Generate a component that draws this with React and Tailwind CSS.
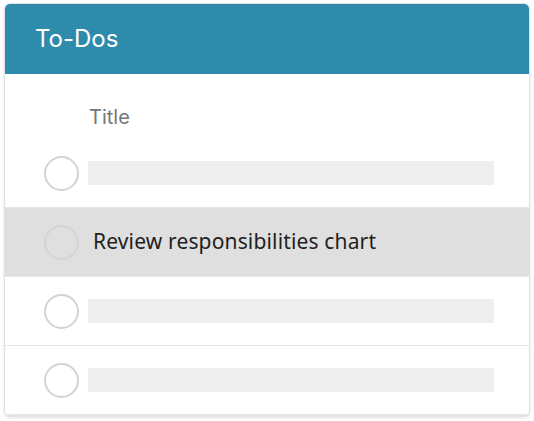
export default function App() {
  const rows = [
    { text: null, active: false },
    { text: "Review responsibilities chart", active: true },
    { text: null, active: false },
    { text: null, active: false },
  ];
  return (
    <div className="w-[534px] h-[421px] bg-white pl-[4px] pt-[3px]">
      <div className="w-[526px] rounded-[6px] border border-[#e2e2e2] shadow-[0_2px_3px_rgba(0,0,0,0.12)] overflow-hidden bg-white">
        <div className="h-[71px] bg-[#2e8bac] flex items-center pl-[31px] -mx-px -mt-px">
          <span className="text-white text-[24px] font-['Inter',sans-serif] font-normal">To-Dos</span>
        </div>
        <div className="h-[65px] flex items-end pb-[7px] pl-[84px]">
          <span className="text-[#777777] text-[20px] font-['Inter',sans-serif]">Title</span>
        </div>
        {rows.map((r, i) => (
          <div
            key={i}
            className={
              "h-[69px] flex items-center border-b border-[#e6e6e6] " +
              (r.active ? "bg-[#dfdfdf]" : "bg-white")
            }
          >
            <div className="ml-[39px] w-[35px] h-[35px] rounded-full border-2 border-[#d3d3d3] shrink-0" />
            {r.text ? (
              <span className="ml-[14px] text-[#1e1e1e] text-[21px] tracking-[0.15px] font-['Noto_Sans',sans-serif]">{r.text}</span>
            ) : (
              <div className="ml-[9px] w-[406px] h-[24px] bg-[#efefef]" />
            )}
          </div>
        ))}
      </div>
    </div>
  );
}
